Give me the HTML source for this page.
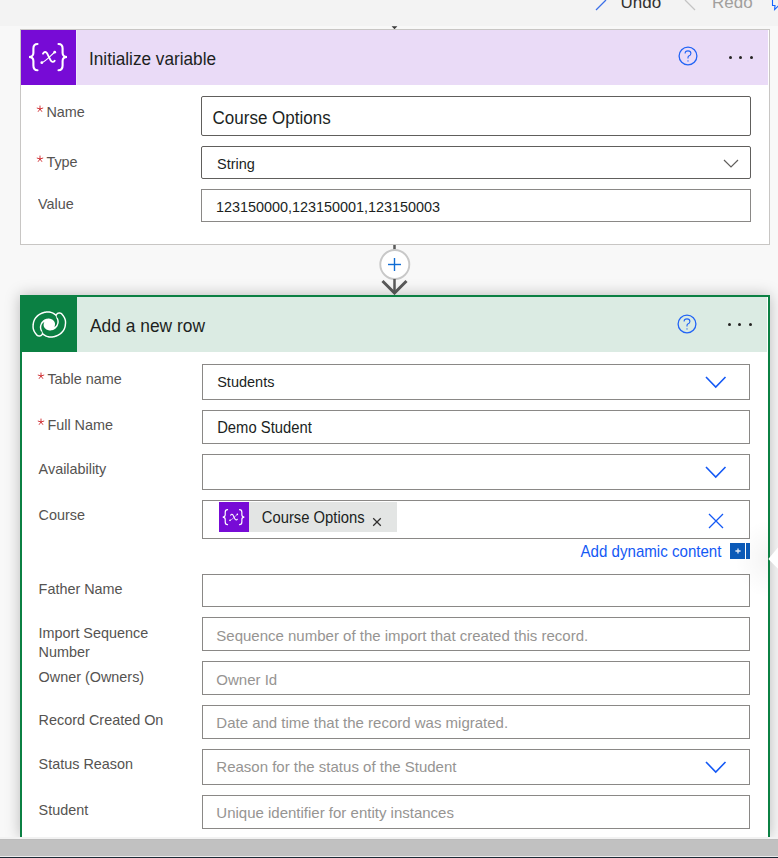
<!DOCTYPE html>
<html><head><meta charset="utf-8">
<style>
*{margin:0;padding:0;box-sizing:border-box}
html,body{width:778px;height:858px;overflow:hidden;background:#f8f8f8;font-family:"Liberation Sans",sans-serif;color:#323130;position:relative}
.a{position:absolute;white-space:nowrap;line-height:1}
</style></head><body>
<div class="a" style="left:0px;top:0px;width:778px;height:26px;background:#f3f3f3;"></div>
<svg class="a" style="left:0;top:0" width="778" height="26"><line x1="596" y1="10" x2="606" y2="0" stroke="#3b6fe8" stroke-width="1.3"/><line x1="685" y1="0" x2="695" y2="10" stroke="#c4c4c4" stroke-width="1.3"/><path d="M772.5 0 L772.5 5.5 L775 5.5 L774.6 9.6 L778.5 5.8" fill="none" stroke="#1463ff" stroke-width="1.1"/></svg>
<div class="a" style="left:620.50px;top:-6.391px;font-size:17px;color:#323130;">Undo</div>
<div class="a" style="left:712.00px;top:-6.391px;font-size:17px;color:#a19f9d;">Redo</div>
<svg class="a" style="left:388px;top:24px" width="12" height="6"><path d="M3.6 2.2 L9.4 2.2 L6.5 5.2 Z" fill="#3a3a3a"/></svg>
<div class="a" style="left:20px;top:29px;width:750px;height:216px;border:1px solid #c8c6c4;background:#fff;border-radius:0px;"></div>
<div class="a" style="left:21px;top:30px;width:747px;height:55px;background:#eadbf7;"></div>
<div class="a" style="left:76px;top:30px;width:1px;height:55px;background:#f1e8fa;"></div>
<div class="a" style="left:21px;top:30px;width:55px;height:55px;background:#770bd6;"></div>
<svg class="a" style="left:26.30px;top:41.10px" width="44.00" height="32.00" viewBox="-22 -16 44 32"><g fill="none" stroke="#fff" stroke-linecap="round"><path d="M-10.5 -13 C-14 -13 -14.6 -11 -14.6 -8.5 L-14.6 -4 C-14.6 -1.3 -16.5 0 -19 0 C-16.5 0 -14.6 1.3 -14.6 4 L-14.6 8.5 C-14.6 11 -14 13.2 -10.5 13.2" stroke-width="2.1"/><path d="M10.5 -13 C14 -13 14.6 -11 14.6 -8.5 L14.6 -4 C14.6 -1.3 16.5 0 19 0 C16.5 0 14.6 1.3 14.6 4 L14.6 8.5 C14.6 11 14 13.2 10.5 13.2" stroke-width="2.1"/><path d="M-5 -3.3 C-4 -5.3 -2 -5.5 -1 -3.8 L2.5 3.2 C3.5 5.2 5.5 5.5 6.7 3.7" stroke-width="1.9"/><path d="M-6.2 5.7 C-2.5 4.7 3.5 -2.3 6.7 -4.8" stroke-width="1.1"/></g><circle cx="-6.2" cy="5.7" r="1.4" fill="#fff"/><circle cx="6.7" cy="-4.8" r="1.4" fill="#fff"/></svg>
<div class="a" style="left:89.00px;top:51.040px;font-size:17.2px;color:#201f1e;transform:scaleY(1.06);transform-origin:0 14.560px;">Initialize variable</div>
<svg class="a" style="left:677.00px;top:45.30px" width="22" height="22"><circle cx="11" cy="11" r="8.9" fill="none" stroke="#2264f5" stroke-width="1.3"/><path d="M8.1 8.6 Q8.1 5.9 11 5.9 Q13.9 5.9 13.9 8.5 Q13.9 10.2 11.8 11.1 Q11 11.5 11 12.6 L11 13.5" fill="none" stroke="#2264f5" stroke-width="1.1"/><circle cx="11" cy="15.9" r="0.7" fill="#2264f5"/></svg>
<div class="a" style="left:728.70px;top:55.60px;width:3px;height:3px;border-radius:50%;background:#252423"></div>
<div class="a" style="left:739.40px;top:55.60px;width:3px;height:3px;border-radius:50%;background:#252423"></div>
<div class="a" style="left:750.10px;top:55.60px;width:3px;height:3px;border-radius:50%;background:#252423"></div>
<svg class="a" style="left:36.20px;top:105.10px" width="8" height="8" viewBox="-4 -4 8 8"><path d="M0 0 L0 -3 M0 0 L-2.8 -0.9 M0 0 L2.8 -0.9 M0 0 L-1.75 2.45 M0 0 L1.75 2.45" stroke="#d13438" stroke-width="0.95" stroke-linecap="round"/></svg>
<div class="a" style="left:46.40px;top:104.810px;font-size:14.4px;color:#555351;transform:scaleY(1.07);transform-origin:0 12.190px;">Name</div>
<svg class="a" style="left:36.20px;top:155.10px" width="8" height="8" viewBox="-4 -4 8 8"><path d="M0 0 L0 -3 M0 0 L-2.8 -0.9 M0 0 L2.8 -0.9 M0 0 L-1.75 2.45 M0 0 L1.75 2.45" stroke="#d13438" stroke-width="0.95" stroke-linecap="round"/></svg>
<div class="a" style="left:46.40px;top:154.810px;font-size:14.4px;color:#555351;transform:scaleY(1.07);transform-origin:0 12.190px;">Type</div>
<div class="a" style="left:38.00px;top:196.810px;font-size:14.4px;color:#555351;transform:scaleY(1.07);transform-origin:0 12.190px;">Value</div>
<div class="a" style="left:201px;top:96px;width:550px;height:40px;border:1px solid #605e5c;background:#fff;border-radius:2px;"></div>
<div class="a" style="left:212.60px;top:109.609px;font-size:17px;color:#201f1e;transform:scaleY(1.06);transform-origin:0 14.391px;">Course Options</div>
<div class="a" style="left:201px;top:146px;width:550px;height:33px;border:1px solid #605e5c;background:#fff;border-radius:2px;"></div>
<div class="a" style="left:217.00px;top:156.726px;font-size:14.5px;color:#201f1e;transform:scaleY(1.06);transform-origin:0 12.274px;">String</div>
<svg class="a" style="left:722.00px;top:157.70px" width="18" height="11"><path d="M2 2 L9.0 9 L16 2" fill="none" stroke="#605e5c" stroke-width="1.2"/></svg>
<div class="a" style="left:201px;top:189px;width:550px;height:33px;border:1px solid #8a8886;background:#fff;border-radius:0px;"></div>
<div class="a" style="left:216.00px;top:199.810px;font-size:14.4px;color:#201f1e;transform:scaleY(1.06);transform-origin:0 12.190px;">123150000,123150001,123150003</div>
<svg class="a" style="left:370px;top:245px" width="50" height="50"><line x1="24.5" y1="0" x2="24.5" y2="6" stroke="#5a5a5a" stroke-width="2.5"/><circle cx="24.8" cy="19.5" r="14.5" fill="#fff" stroke="#c8c8c8" stroke-width="1.9"/><line x1="18" y1="19.5" x2="31" y2="19.5" stroke="#0f6cd4" stroke-width="1.4"/><line x1="24.5" y1="13" x2="24.5" y2="26" stroke="#0f6cd4" stroke-width="1.4"/><line x1="24.5" y1="34" x2="24.5" y2="48" stroke="#5a5a5a" stroke-width="2.5"/><path d="M12.5 36 L24.5 48 L36.5 36" fill="none" stroke="#5a5a5a" stroke-width="3"/></svg>
<div class="a" style="left:20px;top:295px;width:750px;height:542px;border:2px solid #0b8043;border-bottom:none;background:#fff;box-shadow:0 0 14px rgba(0,0,0,.25)"></div>
<div class="a" style="left:22px;top:297px;width:745px;height:55px;background:#dbebe3;"></div>
<div class="a" style="left:22px;top:297px;width:55px;height:55px;background:#0b8043;"></div>
<svg class="a" style="left:28px;top:303px" width="44" height="44" viewBox="28 303 44 44"><path d="M37.42 334.46 L36.87 333.88 L36.36 333.28 L35.89 332.66 L35.46 332.03 L35.08 331.38 L34.74 330.72 L34.44 330.05 L34.18 329.36 L34.00 328.67 L33.88 327.96 L33.81 327.26 L33.79 326.56 L33.80 325.87 L33.87 325.18 L33.97 324.50 L34.02 323.83 L34.12 323.16 L34.25 322.50 L34.43 321.85 L34.64 321.21 L34.90 320.58 L35.19 319.96 L35.53 319.36 L35.89 318.77 L36.30 318.21 L36.74 317.67 L37.22 317.14 L37.73 316.65 L38.27 316.17 L38.83 315.73 L39.42 315.31 L40.04 314.91 L40.67 314.55 L41.33 314.21 L42.00 313.91 L42.70 313.64 L43.41 313.41 L44.13 313.20 L44.85 313.03 L45.59 312.90 L46.33 312.79 L47.07 312.72 L47.82 312.69 L48.56 312.68 L49.30 312.71 L50.03 312.88 L50.73 313.09 L51.41 313.32 L52.07 313.59 L52.70 313.87 L53.30 314.19 L53.87 314.53 L54.41 314.89 L54.92 315.26 L55.39 315.66 L55.72 316.22 L55.99 316.78 L56.21 317.35 L56.38 317.91 L56.50 318.46 L56.72 318.90 L56.90 319.34 L57.05 319.78 L57.17 320.22 L57.25 320.65 L57.30 321.08 L57.32 321.51 L57.30 321.93 L57.29 322.32 L57.26 322.71 L57.21 323.09 L57.13 323.46 L57.03 323.82 L56.90 324.17 L56.75 324.50 L56.58 324.82 L56.38 325.12 L56.17 325.41 L55.94 325.68 L55.69 325.94 L55.44 326.17 L55.17 326.39 L54.89 326.58 L54.60 326.76 L54.31 326.92 L54.21 326.88 L54.35 326.66 L54.48 326.43 L54.59 326.20 L54.69 325.97 L54.78 325.73 L54.85 325.49 L54.90 325.24 L54.94 325.00 L54.96 324.75 L54.97 324.50 L54.99 324.25 L55.00 324.00 L54.99 323.74 L54.97 323.49 L54.93 323.24 L54.87 322.98 L54.80 322.73 L54.72 322.48 L54.62 322.23 L54.50 321.98 L54.37 321.74 L54.22 321.50 L54.06 321.27 L53.88 321.05 L53.68 320.83 L53.49 320.60 L53.28 320.38 L53.05 320.17 L52.81 319.97 L52.55 319.77 L52.28 319.60 L51.99 319.44 L51.69 319.28 L51.38 319.14 L51.05 319.02 L50.72 318.90 L50.38 318.81 L50.02 318.72 L49.67 318.66 L49.30 318.60 L48.93 318.58 L48.56 318.57 L48.18 318.57 L47.80 318.60 L47.42 318.63 L47.05 318.69 L46.67 318.77 L46.30 318.86 L45.93 318.96 L45.57 319.09 L45.21 319.22 L44.86 319.37 L44.51 319.54 L44.17 319.73 L43.84 319.93 L43.53 320.14 L43.22 320.37 L42.93 320.62 L42.65 320.88 L42.39 321.16 L42.11 321.43 L41.86 321.72 L41.61 322.03 L41.39 322.35 L41.19 322.68 L41.00 323.02 L40.84 323.38 L40.70 323.74 L40.58 324.12 L40.48 324.50 L40.30 324.90 L40.15 325.31 L40.03 325.73 L39.93 326.17 L39.87 326.62 L39.83 327.08 L39.83 327.55 L39.88 328.02 L39.95 328.49 L40.06 328.97 L40.21 329.45 L40.38 329.93 L40.60 330.41 L40.85 330.88 L41.13 331.34 L41.04 331.13 L41.49 331.60 L41.79 332.15 L41.91 332.75 L41.86 333.36 L41.62 333.95 L41.23 334.46 L40.71 334.86 L40.09 335.13 L39.41 335.25 L38.72 335.21 L38.08 335.01 L37.51 334.67 Z" fill="#fff" stroke="#fff" stroke-width="2.9" stroke-linejoin="round"/><path d="M61.18 314.54 L61.73 315.12 L62.24 315.72 L62.71 316.34 L63.14 316.97 L63.52 317.62 L63.86 318.28 L64.16 318.95 L64.42 319.64 L64.60 320.33 L64.72 321.04 L64.79 321.74 L64.81 322.44 L64.80 323.13 L64.73 323.82 L64.63 324.50 L64.58 325.17 L64.48 325.84 L64.35 326.50 L64.17 327.15 L63.96 327.79 L63.70 328.42 L63.41 329.04 L63.07 329.64 L62.71 330.23 L62.30 330.79 L61.86 331.33 L61.38 331.86 L60.87 332.35 L60.33 332.83 L59.77 333.27 L59.18 333.69 L58.56 334.09 L57.93 334.45 L57.27 334.79 L56.60 335.09 L55.90 335.36 L55.19 335.59 L54.47 335.80 L53.75 335.97 L53.01 336.10 L52.27 336.21 L51.53 336.28 L50.78 336.31 L50.04 336.32 L49.30 336.29 L48.57 336.12 L47.87 335.91 L47.19 335.68 L46.53 335.41 L45.90 335.13 L45.30 334.81 L44.73 334.47 L44.19 334.11 L43.68 333.74 L43.21 333.34 L42.88 332.78 L42.61 332.22 L42.39 331.65 L42.22 331.09 L42.10 330.54 L41.88 330.10 L41.70 329.66 L41.55 329.22 L41.43 328.78 L41.35 328.35 L41.30 327.92 L41.28 327.49 L41.30 327.07 L41.31 326.68 L41.34 326.29 L41.39 325.91 L41.47 325.54 L41.57 325.18 L41.70 324.83 L41.84 324.50 L42.02 324.18 L42.22 323.88 L42.43 323.59 L42.66 323.32 L42.91 323.06 L43.16 322.83 L43.43 322.61 L43.71 322.42 L44.00 322.24 L44.29 322.08 L44.39 322.12 L44.25 322.34 L44.12 322.57 L44.01 322.80 L43.91 323.03 L43.82 323.27 L43.75 323.51 L43.70 323.76 L43.66 324.00 L43.64 324.25 L43.63 324.50 L43.61 324.75 L43.60 325.00 L43.61 325.26 L43.63 325.51 L43.67 325.76 L43.73 326.02 L43.80 326.27 L43.88 326.52 L43.98 326.77 L44.10 327.02 L44.23 327.26 L44.38 327.50 L44.54 327.73 L44.72 327.95 L44.92 328.17 L45.11 328.40 L45.32 328.62 L45.55 328.83 L45.79 329.03 L46.05 329.23 L46.32 329.40 L46.61 329.56 L46.91 329.72 L47.22 329.86 L47.55 329.98 L47.88 330.10 L48.22 330.19 L48.58 330.28 L48.93 330.34 L49.30 330.40 L49.67 330.42 L50.04 330.43 L50.42 330.43 L50.80 330.40 L51.18 330.37 L51.55 330.31 L51.93 330.23 L52.30 330.14 L52.67 330.04 L53.03 329.91 L53.39 329.78 L53.74 329.63 L54.09 329.46 L54.43 329.27 L54.76 329.07 L55.07 328.86 L55.38 328.63 L55.67 328.38 L55.95 328.12 L56.21 327.84 L56.49 327.57 L56.74 327.28 L56.99 326.97 L57.21 326.65 L57.41 326.32 L57.60 325.98 L57.76 325.62 L57.90 325.26 L58.02 324.88 L58.12 324.50 L58.30 324.10 L58.45 323.69 L58.57 323.27 L58.67 322.83 L58.73 322.38 L58.77 321.92 L58.77 321.45 L58.72 320.98 L58.65 320.51 L58.54 320.03 L58.39 319.55 L58.22 319.07 L58.00 318.59 L57.75 318.12 L57.47 317.66 L57.56 317.87 L57.11 317.40 L56.81 316.85 L56.69 316.25 L56.74 315.64 L56.98 315.05 L57.37 314.54 L57.89 314.14 L58.51 313.87 L59.19 313.75 L59.88 313.79 L60.52 313.99 L61.09 314.33 Z" fill="#fff" stroke="#fff" stroke-width="2.9" stroke-linejoin="round"/><ellipse cx="49.3" cy="324.5" rx="8.4" ry="7.04" fill="#fff"/><path d="M37.42 334.46 L36.87 333.88 L36.36 333.28 L35.89 332.66 L35.46 332.03 L35.08 331.38 L34.74 330.72 L34.44 330.05 L34.18 329.36 L34.00 328.67 L33.88 327.96 L33.81 327.26 L33.79 326.56 L33.80 325.87 L33.87 325.18 L33.97 324.50 L34.02 323.83 L34.12 323.16 L34.25 322.50 L34.43 321.85 L34.64 321.21 L34.90 320.58 L35.19 319.96 L35.53 319.36 L35.89 318.77 L36.30 318.21 L36.74 317.67 L37.22 317.14 L37.73 316.65 L38.27 316.17 L38.83 315.73 L39.42 315.31 L40.04 314.91 L40.67 314.55 L41.33 314.21 L42.00 313.91 L42.70 313.64 L43.41 313.41 L44.13 313.20 L44.85 313.03 L45.59 312.90 L46.33 312.79 L47.07 312.72 L47.82 312.69 L48.56 312.68 L49.30 312.71 L50.03 312.88 L50.73 313.09 L51.41 313.32 L52.07 313.59 L52.70 313.87 L53.30 314.19 L53.87 314.53 L54.41 314.89 L54.92 315.26 L55.39 315.66 L55.72 316.22 L55.99 316.78 L56.21 317.35 L56.38 317.91 L56.50 318.46 L56.72 318.90 L56.90 319.34 L57.05 319.78 L57.17 320.22 L57.25 320.65 L57.30 321.08 L57.32 321.51 L57.30 321.93 L57.29 322.32 L57.26 322.71 L57.21 323.09 L57.13 323.46 L57.03 323.82 L56.90 324.17 L56.75 324.50 L56.58 324.82 L56.38 325.12 L56.17 325.41 L55.94 325.68 L55.69 325.94 L55.44 326.17 L55.17 326.39 L54.89 326.58 L54.60 326.76 L54.31 326.92 L54.21 326.88 L54.35 326.66 L54.48 326.43 L54.59 326.20 L54.69 325.97 L54.78 325.73 L54.85 325.49 L54.90 325.24 L54.94 325.00 L54.96 324.75 L54.97 324.50 L54.99 324.25 L55.00 324.00 L54.99 323.74 L54.97 323.49 L54.93 323.24 L54.87 322.98 L54.80 322.73 L54.72 322.48 L54.62 322.23 L54.50 321.98 L54.37 321.74 L54.22 321.50 L54.06 321.27 L53.88 321.05 L53.68 320.83 L53.49 320.60 L53.28 320.38 L53.05 320.17 L52.81 319.97 L52.55 319.77 L52.28 319.60 L51.99 319.44 L51.69 319.28 L51.38 319.14 L51.05 319.02 L50.72 318.90 L50.38 318.81 L50.02 318.72 L49.67 318.66 L49.30 318.60 L48.93 318.58 L48.56 318.57 L48.18 318.57 L47.80 318.60 L47.42 318.63 L47.05 318.69 L46.67 318.77 L46.30 318.86 L45.93 318.96 L45.57 319.09 L45.21 319.22 L44.86 319.37 L44.51 319.54 L44.17 319.73 L43.84 319.93 L43.53 320.14 L43.22 320.37 L42.93 320.62 L42.65 320.88 L42.39 321.16 L42.11 321.43 L41.86 321.72 L41.61 322.03 L41.39 322.35 L41.19 322.68 L41.00 323.02 L40.84 323.38 L40.70 323.74 L40.58 324.12 L40.48 324.50 L40.30 324.90 L40.15 325.31 L40.03 325.73 L39.93 326.17 L39.87 326.62 L39.83 327.08 L39.83 327.55 L39.88 328.02 L39.95 328.49 L40.06 328.97 L40.21 329.45 L40.38 329.93 L40.60 330.41 L40.85 330.88 L41.13 331.34 L41.04 331.13 L41.49 331.60 L41.79 332.15 L41.91 332.75 L41.86 333.36 L41.62 333.95 L41.23 334.46 L40.71 334.86 L40.09 335.13 L39.41 335.25 L38.72 335.21 L38.08 335.01 L37.51 334.67 Z" fill="#0b8043"/><path d="M61.18 314.54 L61.73 315.12 L62.24 315.72 L62.71 316.34 L63.14 316.97 L63.52 317.62 L63.86 318.28 L64.16 318.95 L64.42 319.64 L64.60 320.33 L64.72 321.04 L64.79 321.74 L64.81 322.44 L64.80 323.13 L64.73 323.82 L64.63 324.50 L64.58 325.17 L64.48 325.84 L64.35 326.50 L64.17 327.15 L63.96 327.79 L63.70 328.42 L63.41 329.04 L63.07 329.64 L62.71 330.23 L62.30 330.79 L61.86 331.33 L61.38 331.86 L60.87 332.35 L60.33 332.83 L59.77 333.27 L59.18 333.69 L58.56 334.09 L57.93 334.45 L57.27 334.79 L56.60 335.09 L55.90 335.36 L55.19 335.59 L54.47 335.80 L53.75 335.97 L53.01 336.10 L52.27 336.21 L51.53 336.28 L50.78 336.31 L50.04 336.32 L49.30 336.29 L48.57 336.12 L47.87 335.91 L47.19 335.68 L46.53 335.41 L45.90 335.13 L45.30 334.81 L44.73 334.47 L44.19 334.11 L43.68 333.74 L43.21 333.34 L42.88 332.78 L42.61 332.22 L42.39 331.65 L42.22 331.09 L42.10 330.54 L41.88 330.10 L41.70 329.66 L41.55 329.22 L41.43 328.78 L41.35 328.35 L41.30 327.92 L41.28 327.49 L41.30 327.07 L41.31 326.68 L41.34 326.29 L41.39 325.91 L41.47 325.54 L41.57 325.18 L41.70 324.83 L41.84 324.50 L42.02 324.18 L42.22 323.88 L42.43 323.59 L42.66 323.32 L42.91 323.06 L43.16 322.83 L43.43 322.61 L43.71 322.42 L44.00 322.24 L44.29 322.08 L44.39 322.12 L44.25 322.34 L44.12 322.57 L44.01 322.80 L43.91 323.03 L43.82 323.27 L43.75 323.51 L43.70 323.76 L43.66 324.00 L43.64 324.25 L43.63 324.50 L43.61 324.75 L43.60 325.00 L43.61 325.26 L43.63 325.51 L43.67 325.76 L43.73 326.02 L43.80 326.27 L43.88 326.52 L43.98 326.77 L44.10 327.02 L44.23 327.26 L44.38 327.50 L44.54 327.73 L44.72 327.95 L44.92 328.17 L45.11 328.40 L45.32 328.62 L45.55 328.83 L45.79 329.03 L46.05 329.23 L46.32 329.40 L46.61 329.56 L46.91 329.72 L47.22 329.86 L47.55 329.98 L47.88 330.10 L48.22 330.19 L48.58 330.28 L48.93 330.34 L49.30 330.40 L49.67 330.42 L50.04 330.43 L50.42 330.43 L50.80 330.40 L51.18 330.37 L51.55 330.31 L51.93 330.23 L52.30 330.14 L52.67 330.04 L53.03 329.91 L53.39 329.78 L53.74 329.63 L54.09 329.46 L54.43 329.27 L54.76 329.07 L55.07 328.86 L55.38 328.63 L55.67 328.38 L55.95 328.12 L56.21 327.84 L56.49 327.57 L56.74 327.28 L56.99 326.97 L57.21 326.65 L57.41 326.32 L57.60 325.98 L57.76 325.62 L57.90 325.26 L58.02 324.88 L58.12 324.50 L58.30 324.10 L58.45 323.69 L58.57 323.27 L58.67 322.83 L58.73 322.38 L58.77 321.92 L58.77 321.45 L58.72 320.98 L58.65 320.51 L58.54 320.03 L58.39 319.55 L58.22 319.07 L58.00 318.59 L57.75 318.12 L57.47 317.66 L57.56 317.87 L57.11 317.40 L56.81 316.85 L56.69 316.25 L56.74 315.64 L56.98 315.05 L57.37 314.54 L57.89 314.14 L58.51 313.87 L59.19 313.75 L59.88 313.79 L60.52 313.99 L61.09 314.33 Z" fill="#0b8043"/></svg>
<div class="a" style="left:90.00px;top:317.871px;font-size:17.4px;color:#201f1e;transform:scaleY(1.06);transform-origin:0 14.729px;">Add a new row</div>
<svg class="a" style="left:675.50px;top:313.30px" width="22" height="22"><circle cx="11" cy="11" r="8.9" fill="none" stroke="#2264f5" stroke-width="1.3"/><path d="M8.1 8.6 Q8.1 5.9 11 5.9 Q13.9 5.9 13.9 8.5 Q13.9 10.2 11.8 11.1 Q11 11.5 11 12.6 L11 13.5" fill="none" stroke="#2264f5" stroke-width="1.1"/><circle cx="11" cy="15.9" r="0.7" fill="#2264f5"/></svg>
<div class="a" style="left:727.70px;top:323.40px;width:3px;height:3px;border-radius:50%;background:#252423"></div>
<div class="a" style="left:738.30px;top:323.40px;width:3px;height:3px;border-radius:50%;background:#252423"></div>
<div class="a" style="left:748.90px;top:323.40px;width:3px;height:3px;border-radius:50%;background:#252423"></div>
<svg class="a" style="left:37.20px;top:372.10px" width="8" height="8" viewBox="-4 -4 8 8"><path d="M0 0 L0 -3 M0 0 L-2.8 -0.9 M0 0 L2.8 -0.9 M0 0 L-1.75 2.45 M0 0 L1.75 2.45" stroke="#d13438" stroke-width="0.95" stroke-linecap="round"/></svg>
<div class="a" style="left:47.40px;top:371.810px;font-size:14.4px;color:#555351;transform:scaleY(1.07);transform-origin:0 12.190px;">Table name</div>
<svg class="a" style="left:37.20px;top:418.10px" width="8" height="8" viewBox="-4 -4 8 8"><path d="M0 0 L0 -3 M0 0 L-2.8 -0.9 M0 0 L2.8 -0.9 M0 0 L-1.75 2.45 M0 0 L1.75 2.45" stroke="#d13438" stroke-width="0.95" stroke-linecap="round"/></svg>
<div class="a" style="left:47.40px;top:417.810px;font-size:14.4px;color:#555351;transform:scaleY(1.07);transform-origin:0 12.190px;">Full Name</div>
<div class="a" style="left:38.60px;top:461.810px;font-size:14.4px;color:#555351;transform:scaleY(1.07);transform-origin:0 12.190px;">Availability</div>
<div class="a" style="left:38.60px;top:507.810px;font-size:14.4px;color:#555351;transform:scaleY(1.07);transform-origin:0 12.190px;">Course</div>
<div class="a" style="left:38.60px;top:581.810px;font-size:14.4px;color:#555351;transform:scaleY(1.07);transform-origin:0 12.190px;">Father Name</div>
<div class="a" style="left:38.60px;top:625.810px;font-size:14.4px;color:#555351;transform:scaleY(1.07);transform-origin:0 12.190px;">Import Sequence</div>
<div class="a" style="left:38.60px;top:644.810px;font-size:14.4px;color:#555351;transform:scaleY(1.07);transform-origin:0 12.190px;">Number</div>
<div class="a" style="left:38.60px;top:669.810px;font-size:14.4px;color:#555351;transform:scaleY(1.07);transform-origin:0 12.190px;">Owner (Owners)</div>
<div class="a" style="left:38.60px;top:712.810px;font-size:14.4px;color:#555351;transform:scaleY(1.07);transform-origin:0 12.190px;">Record Created On</div>
<div class="a" style="left:38.60px;top:756.810px;font-size:14.4px;color:#555351;transform:scaleY(1.07);transform-origin:0 12.190px;">Status Reason</div>
<div class="a" style="left:38.60px;top:802.810px;font-size:14.4px;color:#555351;transform:scaleY(1.07);transform-origin:0 12.190px;">Student</div>
<div class="a" style="left:202px;top:364px;width:548px;height:36px;border:1px solid #8a8886;background:#fff;border-radius:0px;"></div>
<div class="a" style="left:217.20px;top:374.726px;font-size:14.5px;color:#201f1e;transform:scaleY(1.06);transform-origin:0 12.274px;">Students</div>
<svg class="a" style="left:704.25px;top:375.40px" width="23.5" height="14"><path d="M2 2 L11.75 12 L21.5 2" fill="none" stroke="#1459f5" stroke-width="1.6"/></svg>
<div class="a" style="left:202px;top:410px;width:548px;height:34px;border:1px solid #8a8886;background:#fff;border-radius:0px;"></div>
<div class="a" style="left:217.20px;top:421.072px;font-size:14.8px;color:#201f1e;transform:scaleY(1.06);transform-origin:0 12.528px;">Demo Student</div>
<div class="a" style="left:202px;top:454px;width:548px;height:36px;border:1px solid #8a8886;background:#fff;border-radius:0px;"></div>
<svg class="a" style="left:704.25px;top:465.40px" width="23.5" height="14"><path d="M2 2 L11.75 12 L21.5 2" fill="none" stroke="#1459f5" stroke-width="1.6"/></svg>
<div class="a" style="left:202px;top:500px;width:548px;height:39px;border:1px solid #8a8886;background:#fff;border-radius:0px;"></div>
<div class="a" style="left:219px;top:502px;width:30px;height:30px;background:#770bd6;"></div>
<svg class="a" style="left:221.46px;top:507.78px" width="25.08" height="18.24" viewBox="-22 -16 44 32"><g fill="none" stroke="#fff" stroke-linecap="round"><path d="M-10.5 -13 C-14 -13 -14.6 -11 -14.6 -8.5 L-14.6 -4 C-14.6 -1.3 -16.5 0 -19 0 C-16.5 0 -14.6 1.3 -14.6 4 L-14.6 8.5 C-14.6 11 -14 13.2 -10.5 13.2" stroke-width="2.1"/><path d="M10.5 -13 C14 -13 14.6 -11 14.6 -8.5 L14.6 -4 C14.6 -1.3 16.5 0 19 0 C16.5 0 14.6 1.3 14.6 4 L14.6 8.5 C14.6 11 14 13.2 10.5 13.2" stroke-width="2.1"/><path d="M-5 -3.3 C-4 -5.3 -2 -5.5 -1 -3.8 L2.5 3.2 C3.5 5.2 5.5 5.5 6.7 3.7" stroke-width="1.9"/><path d="M-6.2 5.7 C-2.5 4.7 3.5 -2.3 6.7 -4.8" stroke-width="1.1"/></g><circle cx="-6.2" cy="5.7" r="1.4" fill="#fff"/><circle cx="6.7" cy="-4.8" r="1.4" fill="#fff"/></svg>
<div class="a" style="left:249px;top:502px;width:148px;height:30px;background:#e3e5e4;"></div>
<div class="a" style="left:261.80px;top:511.072px;font-size:14.8px;color:#201f1e;transform:scaleY(1.06);transform-origin:0 12.528px;">Course Options</div>
<svg class="a" style="left:370px;top:514.5px" width="14" height="14"><path d="M3.2 3.2 L10.8 10.8 M10.8 3.2 L3.2 10.8" stroke="#323130" stroke-width="1.25"/></svg>
<svg class="a" style="left:706px;top:511px" width="20" height="20"><path d="M3 3 L17 17 M17 3 L3 17" stroke="#1459f5" stroke-width="1.3"/></svg>
<div class="a" style="left:580.50px;top:544.218px;font-size:15.1px;color:#1459f5;transform:scaleY(1.06);transform-origin:0 12.782px;">Add dynamic content</div>
<div class="a" style="left:730px;top:543px;width:15px;height:16px;background:#0b5ab8;"></div>
<div class="a" style="left:746px;top:543px;width:4px;height:16px;background:#0b5ab8;"></div>
<svg class="a" style="left:730px;top:543px" width="15" height="16"><path d="M8 5.4 L8 10.6 M5.4 8 L10.6 8" stroke="#e4ebf7" stroke-width="1.3"/></svg>
<div class="a" style="left:202px;top:574px;width:548px;height:33px;border:1px solid #8a8886;background:#fff;border-radius:0px;"></div>
<div class="a" style="left:202px;top:617px;width:548px;height:34px;border:1px solid #8a8886;background:#fff;border-radius:0px;"></div>
<div class="a" style="left:216.30px;top:628.303px;font-size:15px;color:#969492;">Sequence number of the import that created this record.</div>
<div class="a" style="left:202px;top:661px;width:548px;height:34px;border:1px solid #8a8886;background:#fff;border-radius:0px;"></div>
<div class="a" style="left:216.30px;top:672.303px;font-size:15px;color:#969492;">Owner Id</div>
<div class="a" style="left:202px;top:705px;width:548px;height:34px;border:1px solid #8a8886;background:#fff;border-radius:0px;"></div>
<div class="a" style="left:216.30px;top:715.303px;font-size:15px;color:#969492;">Date and time that the record was migrated.</div>
<div class="a" style="left:202px;top:749px;width:548px;height:36px;border:1px solid #8a8886;background:#fff;border-radius:0px;"></div>
<div class="a" style="left:216.30px;top:759.303px;font-size:15px;color:#969492;">Reason for the status of the Student</div>
<svg class="a" style="left:704.25px;top:760.40px" width="23.5" height="14"><path d="M2 2 L11.75 12 L21.5 2" fill="none" stroke="#1459f5" stroke-width="1.6"/></svg>
<div class="a" style="left:202px;top:795px;width:548px;height:34px;border:1px solid #8a8886;background:#fff;border-radius:0px;"></div>
<div class="a" style="left:216.30px;top:805.303px;font-size:15px;color:#969492;">Unique identifier for entity instances</div>
<div class="a" style="left:735px;top:520px;width:33px;height:78px;background:radial-gradient(ellipse 33px 39px at 100% 50%, rgba(0,0,0,.045), rgba(0,0,0,0) 100%)"></div>
<svg class="a" style="left:760px;top:540px" width="18" height="40"><path d="M18 7.6 L8.3 18.9 L18 28.8 Z" fill="#fff"/></svg>
<div class="a" style="left:0px;top:837px;width:778px;height:2px;background:#f2f2f2;"></div>
<div class="a" style="left:0px;top:839px;width:778px;height:1px;background:#bcbcbc;"></div>
<div class="a" style="left:0px;top:840px;width:778px;height:16px;background:#c1c1c1;"></div>
<div class="a" style="left:0px;top:856px;width:778px;height:1px;background:#ececec;"></div>
<div class="a" style="left:0px;top:857px;width:778px;height:1px;background:#1b2a36;"></div>
</body></html>
